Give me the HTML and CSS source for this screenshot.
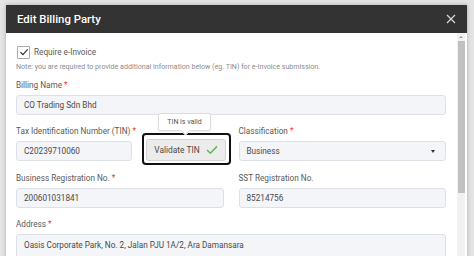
FILE: index.html
```html
<!DOCTYPE html>
<html>
<head>
<meta charset="utf-8">
<link rel="stylesheet" href="styles.css">
</head>
<body>
<div class="modal">
  <div class="header">
    <span class="title">Edit Billing Party</span>
    <svg class="close" width="10" height="10" viewBox="0 0 10 10"><path d="M1 1 L9 9 M9 1 L1 9" stroke="#d8d8d8" stroke-width="1.2" fill="none"/></svg>
  </div>
  <div class="body">
    <div class="content">
      <div class="check-row">
        <span class="checkbox"><svg width="10" height="10" viewBox="0 0 10 10"><path d="M1.5 5.2 L4 7.6 L8.6 2.4" fill="none" stroke="#333" stroke-width="1.2"/></svg></span>
        <span class="check-label">Require e-Invoice</span>
      </div>
      <div class="note">Note: you are required to provide additional information below (eg. TIN) for e-Invoice submission.</div>

      <div class="field">
        <div class="label">Billing Name <span class="req">*</span></div>
        <div class="input">CO Trading Sdn Bhd</div>
      </div>

      <div class="grid">
        <div class="field">
          <div class="label">Tax Identification Number (TIN) <span class="req">*</span></div>
          <div class="tin-row">
            <div class="input tin-input">C20239710060</div>
            <div class="highlight">
              <div class="tooltip">TIN is valid</div>
              <div class="btn">Validate TIN <svg width="12" height="10" viewBox="0 0 12 10"><path d="M1 5 L4.3 8.2 L11 1.4" fill="none" stroke="#5cb85c" stroke-width="1.5"/></svg></div>
            </div>
          </div>
        </div>
        <div class="field">
          <div class="label">Classification <span class="req">*</span></div>
          <div class="input select">Business <span class="caret"></span></div>
        </div>
        <div class="field">
          <div class="label">Business Registration No. <span class="req">*</span></div>
          <div class="input">200601031841</div>
        </div>
        <div class="field">
          <div class="label">SST Registration No.</div>
          <div class="input">85214756</div>
        </div>
      </div>

      <div class="field">
        <div class="label">Address <span class="req">*</span></div>
        <div class="input textarea">Oasis Corporate Park, No. 2, Jalan PJU 1A/2, Ara Damansara</div>
      </div>
    </div>
    <div class="scrollbar">
      <div class="arrow-up"></div>
      <div class="thumb"></div>
    </div>
  </div>
</div>
</body>
</html>
```

FILE: styles.css
```css
html, body {
  margin: 0;
  padding: 0;
  height: 256px;
  overflow: hidden;
}
body {
  background: #e4e4e4;
  font-family: Roboto, "Liberation Sans", sans-serif;
  color: #5a5a5a;
}
.modal {
  margin: 5px 0 0 6px;
  width: 461px;
  box-shadow: 0 0 4px rgba(0,0,0,0.25);
}
.header {
  height: 28px;
  background: #333333;
  display: flex;
  align-items: center;
  justify-content: space-between;
  padding: 0 11px 0 11px;
}
.title {
  color: #fff;
  font-size: 11.4px;
  font-weight: 500;
}
.body {
  background: #fff;
  display: flex;
  height: 230px;
}
.content {
  flex: 1;
  min-width: 0;
  padding: 12px 11px 0 10px;
}
.check-row {
  display: flex;
  align-items: center;
  height: 14px;
}
.checkbox {
  width: 11px;
  height: 11px;
  border: 1px solid #aaa;
  border-radius: 1px;
  display: flex;
  align-items: center;
  justify-content: center;
  margin-left: 1px;
  margin-right: 4px;
}
.check-label {
  font-size: 8.2px;
  color: #5a5a5a;
}
.note {
  font-size: 7.1px;
  color: #8c8c8c;
  margin-top: 3px;
  margin-bottom: 9px;
}
.field {
  margin-bottom: 11px;
}
.label {
  font-size: 8.2px;
  line-height: 10px;
  margin-bottom: 5px;
  color: #5a5a5a;
  white-space: nowrap;
}
.req {
  color: #e0413b;
}
.input {
  height: 20px;
  box-sizing: border-box;
  background: #f3f5f8;
  border: 1px solid #dde1e6;
  border-radius: 3px;
  font-size: 8.2px;
  color: #4a4a4a;
  display: flex;
  align-items: center;
  padding-left: 7px;
}
.grid {
  display: grid;
  grid-template-columns: minmax(0, 1fr) minmax(0, 1fr);
  column-gap: 15px;
}
.grid .field {
  margin-bottom: 11.5px;
}
.tin-row {
  display: flex;
  align-items: flex-start;
}
.tin-input {
  width: 116px;
  flex: none;
}
.highlight {
  position: relative;
  flex: none;
  margin-left: 10px;
  margin-top: -8px;
  margin-bottom: -5px;
  border: 2.5px solid #111;
  border-radius: 4px;
  padding: 4px 3px 2px 2px;
}
.btn {
  width: 80px;
  height: 22px;
  box-sizing: border-box;
  background: #ececec;
  border: 1px solid #d4d4d4;
  border-radius: 3px;
  display: flex;
  align-items: center;
  justify-content: center;
  gap: 6px;
  font-size: 8.4px;
  color: #4a4a4a;
}
.tooltip {
  position: absolute;
  left: 14px;
  top: -22px;
  width: 53px;
  height: 18px;
  box-sizing: border-box;
  background: #fff;
  border: 1px solid #ddd;
  border-radius: 2px;
  font-size: 7px;
  color: #555;
  display: flex;
  align-items: center;
  justify-content: center;
  box-shadow: 0 1px 2px rgba(0,0,0,0.08);
}
.tooltip::after {
  content: "";
  position: absolute;
  left: 23px;
  bottom: -4px;
  width: 6px;
  height: 6px;
  background: #fff;
  border-right: 1px solid #ddd;
  border-bottom: 1px solid #ddd;
  transform: rotate(45deg);
}
.select {
  justify-content: space-between;
  padding-right: 10px;
}
.caret {
  width: 0;
  height: 0;
  border-left: 2.5px solid transparent;
  border-right: 2.5px solid transparent;
  border-top: 3px solid #333;
}
.textarea {
  height: 40px;
  align-items: flex-start;
  padding-top: 5px;
}
.scrollbar {
  width: 8px;
  background: #f1f1f1;
  margin-right: 2px;
  display: flex;
  flex-direction: column;
  align-items: center;
}
.arrow-up {
  margin-top: 3px;
  width: 0;
  height: 0;
  border-left: 2px solid transparent;
  border-right: 2px solid transparent;
  border-bottom: 2px solid #999;
}
.thumb {
  margin-top: 3px;
  width: 7px;
  height: 152px;
  background: #c1c1c1;
}
```
